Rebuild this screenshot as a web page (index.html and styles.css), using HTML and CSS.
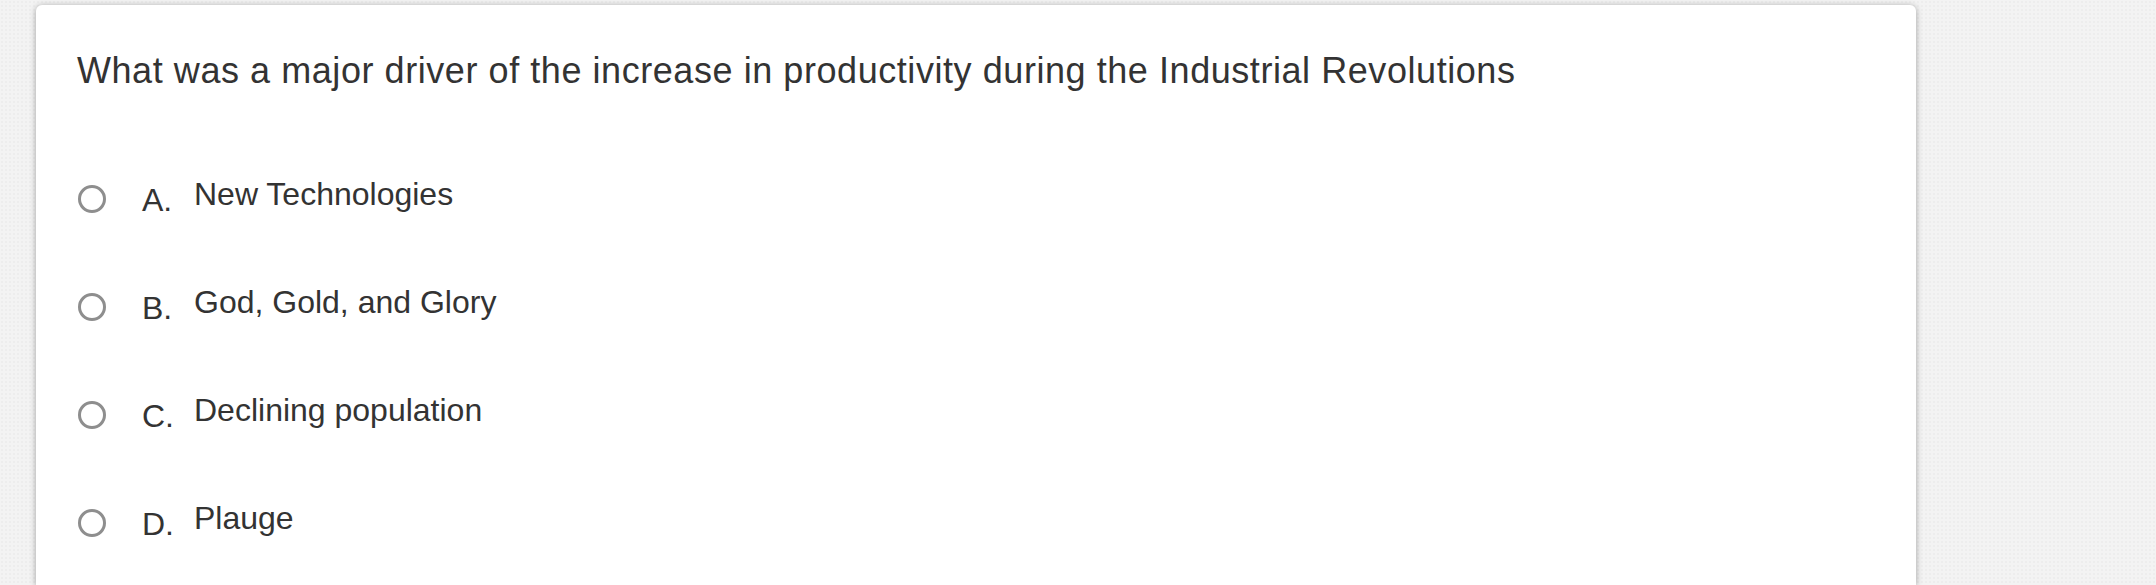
FILE: index.html
```html
<!DOCTYPE html>
<html>
<head>
<meta charset="utf-8">
<link rel="stylesheet" href="styles.css">
</head>
<body>
<div class="card">
  <div class="question">What was a major driver of the increase in productivity during the Industrial Revolutions</div>
  <div class="options">
    <div class="option"><span class="radio"></span><span class="letter">A.</span><span class="text">New Technologies</span></div>
    <div class="option"><span class="radio"></span><span class="letter">B.</span><span class="text">God, Gold, and Glory</span></div>
    <div class="option"><span class="radio"></span><span class="letter">C.</span><span class="text">Declining population</span></div>
    <div class="option"><span class="radio"></span><span class="letter">D.</span><span class="text">Plauge</span></div>
  </div>
</div>
</body>
</html>
```
FILE: styles.css
```css
html, body {
  margin: 0;
  padding: 0;
}
body {
  background-color: #f3f3f3;
  background-image: radial-gradient(rgba(0,0,0,0.025) 1px, transparent 1.2px);
  background-size: 4px 4px;
  height: 585px;
  overflow: hidden;
  font-family: "Liberation Sans", Arial, Helvetica, sans-serif;
  color: #333333;
}
.card {
  margin: 5px 0 0 36px;
  width: 1880px;
  height: 580px;
  box-sizing: border-box;
  background: #ffffff;
  border-radius: 6px 6px 0 0;
  box-shadow: 0 1px 6px rgba(0,0,0,0.35);
  padding: 45px 0 0 41px;
}
.question {
  font-size: 36px;
  line-height: 41px;
  letter-spacing: 0.56px;
}
.options {
  margin-top: 85px;
}
.option {
  display: flex;
  align-items: flex-start;
  height: 108px;
  font-size: 32px;
  line-height: 37px;
}
.radio {
  flex: none;
  width: 28px;
  height: 28px;
  box-sizing: border-box;
  border: 3px solid #8e8e8e;
  border-radius: 50%;
  margin: 9px 36px 0 1px;
}
.letter {
  flex: none;
  width: 52px;
  padding-top: 6px;
}
.text {
  flex: none;
}
```
